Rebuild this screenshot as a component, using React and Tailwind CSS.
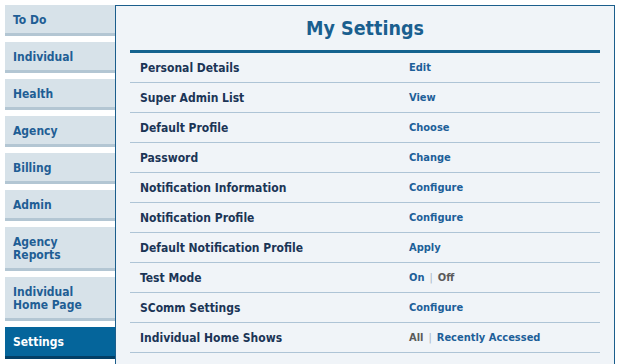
import React from "react";

const tabs = [
  { label: "To Do" },
  { label: "Individual" },
  { label: "Health" },
  { label: "Agency" },
  { label: "Billing" },
  { label: "Admin" },
  { label: "Agency\nReports" },
  { label: "Individual\nHome Page" },
  { label: "Settings", active: true },
];

const rows = [
  { name: "Personal Details", actions: [{ t: "Edit" }] },
  { name: "Super Admin List", actions: [{ t: "View" }] },
  { name: "Default Profile", actions: [{ t: "Choose" }] },
  { name: "Password", actions: [{ t: "Change" }] },
  { name: "Notification Information", actions: [{ t: "Configure" }] },
  { name: "Notification Profile", actions: [{ t: "Configure" }] },
  { name: "Default Notification Profile", actions: [{ t: "Apply" }] },
  { name: "Test Mode", actions: [{ t: "On" }, { t: "Off", off: true }] },
  { name: "SComm Settings", actions: [{ t: "Configure" }] },
  { name: "Individual Home Shows", actions: [{ t: "All", off: true }, { t: "Recently Accessed" }] },
];

function Tab({ label, active }) {
  return (
    <div
      className={
        active
          ? "bg-[#05659b] border-b-[3px] border-[#033f66] text-white pl-2 pt-[9px] pb-[7px] leading-[13px] whitespace-pre-line"
          : "bg-[#d7e2e9] border-b-[3px] border-[#b3c6d3] text-[#1f5e95] pl-2 pt-[9px] pb-[6px] leading-[13px] whitespace-pre-line"
      }
    >
      {label}
    </div>
  );
}

export default function App() {
  return (
    <div className="h-[364px] w-[620px] overflow-hidden bg-white font-['DejaVu_Sans_Condensed','DejaVu_Sans',sans-serif] font-bold">
      <div className="flex pt-[5px] pl-[5px]">
        {/* Side tabs */}
        <div className="w-[110px] flex flex-col gap-[6px] text-[12px]">
          {tabs.map((tab) => (
            <Tab key={tab.label} {...tab} />
          ))}
        </div>

        {/* Settings panel */}
        <div className="w-[500px] h-[400px] border border-[#1b5e8c] bg-[#f0f4f8] px-[14px]">
          <h1 className="h-[47px] flex items-center justify-center pt-[2px] text-[19.5px] text-[#1a5f8f] border-b-[3px] border-[#15638f]">
            My Settings
          </h1>
          <div className="text-[12px]">
            {rows.map((row) => (
              <div
                key={row.name}
                className="flex items-center h-[30px] border-b border-[#aec4d6]"
              >
                <div className="w-[279px] pl-[10px] text-[#1b3556]">{row.name}</div>
                <div className="flex items-center pt-[2px] text-[11px] text-[#1d5f99]">
                  {row.actions.map((a, i) => (
                    <React.Fragment key={a.t}>
                      {i > 0 && <span className="px-[5px] font-normal text-[#a9b6c4]">|</span>}
                      <span className={a.off ? "text-[#5a5a5a]" : ""}>{a.t}</span>
                    </React.Fragment>
                  ))}
                </div>
              </div>
            ))}
          </div>
        </div>
      </div>
    </div>
  );
}
